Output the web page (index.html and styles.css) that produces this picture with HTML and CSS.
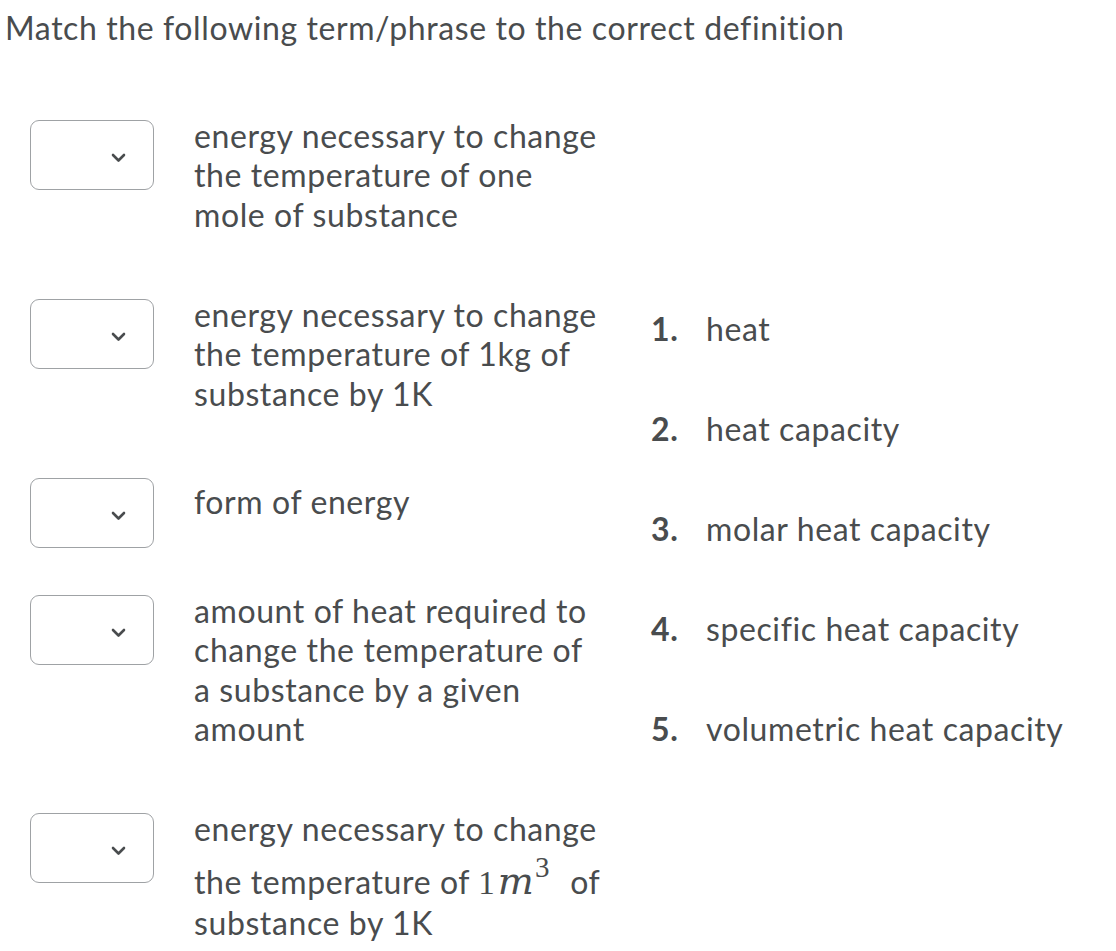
FILE: index.html
```html
<!DOCTYPE html>
<html lang="en">
<head>
<meta charset="utf-8">
<title>Matching question</title>
<link rel="stylesheet" href="styles.css">
</head>
<body>
<main class="question">
  <h1 class="prompt">Match the following term/phrase to the correct definition</h1>
  <div class="matching">
    <div class="pairs">
      <div class="pair">
        <div class="select" role="combobox" aria-label="Select answer"><svg class="chevron" viewBox="0 0 15 10" aria-hidden="true"><polyline points="2,2 7.5,7.5 13,2"/></svg></div>
        <p class="definition">energy necessary to change the temperature of one mole of substance</p>
      </div>
      <div class="pair">
        <div class="select" role="combobox" aria-label="Select answer"><svg class="chevron" viewBox="0 0 15 10" aria-hidden="true"><polyline points="2,2 7.5,7.5 13,2"/></svg></div>
        <p class="definition">energy necessary to change the temperature of 1kg of substance by 1K</p>
      </div>
      <div class="pair pair--short">
        <div class="select" role="combobox" aria-label="Select answer"><svg class="chevron" viewBox="0 0 15 10" aria-hidden="true"><polyline points="2,2 7.5,7.5 13,2"/></svg></div>
        <p class="definition">form of energy</p>
      </div>
      <div class="pair">
        <div class="select" role="combobox" aria-label="Select answer"><svg class="chevron" viewBox="0 0 15 10" aria-hidden="true"><polyline points="2,2 7.5,7.5 13,2"/></svg></div>
        <p class="definition">amount of heat required to change the temperature of a substance by a given amount</p>
      </div>
      <div class="pair">
        <div class="select" role="combobox" aria-label="Select answer"><svg class="chevron" viewBox="0 0 15 10" aria-hidden="true"><polyline points="2,2 7.5,7.5 13,2"/></svg></div>
        <p class="definition">energy necessary to change the temperature of <span class="math"><span class="math-num">1</span><span class="math-var">m</span><sup class="math-sup">3</sup></span> of substance by 1K</p>
      </div>
    </div>
    <ol class="choices">
      <li class="choice"><span class="choice-num">1.</span><span class="choice-text">heat</span></li>
      <li class="choice"><span class="choice-num">2.</span><span class="choice-text">heat capacity</span></li>
      <li class="choice"><span class="choice-num">3.</span><span class="choice-text">molar heat capacity</span></li>
      <li class="choice"><span class="choice-num">4.</span><span class="choice-text">specific heat capacity</span></li>
      <li class="choice"><span class="choice-num">5.</span><span class="choice-text">volumetric heat capacity</span></li>
    </ol>
  </div>
</main>
</body>
</html>
```

FILE: styles.css
```css
html, body {
  margin: 0;
  padding: 0;
  background: #ffffff;
}

body {
  font-family: Lato, "Open Sans", sans-serif;
  font-size: 32px;
  letter-spacing: 0.6px;
  line-height: 39.5px;
  color: #494c4e;
}

.question {
  padding: 8px 0 0 5px;
}

.prompt {
  margin: 0;
  font-size: 32px;
  font-weight: 400;
  letter-spacing: 0.6px;
  line-height: 39.5px;
  color: #494c4e;
}

.matching {
  display: flex;
  align-items: center;
  margin-top: 68px;
  padding-left: 25px;
}

.pairs {
  flex: none;
  display: flex;
  flex-direction: column;
  gap: 60.5px;
  width: 574px;
}

.pair {
  display: flex;
  align-items: flex-start;
  gap: 40px;
}

.pair--short {
  margin-bottom: -17.5px;
}

.pair--short .definition {
  padding-top: 8px;
}

.select {
  flex: none;
  box-sizing: border-box;
  width: 124px;
  height: 70px;
  margin-top: 4px;
  border: 1.5px solid #9fa2a5;
  border-radius: 9px;
  background: #ffffff;
  display: flex;
  align-items: center;
  justify-content: flex-end;
  padding: 6px 27px 0 0;
}

.chevron {
  width: 15px;
  height: 10px;
  fill: none;
  stroke: #494c4e;
  stroke-width: 2.6;
  stroke-linecap: round;
  stroke-linejoin: round;
}

.definition {
  margin: 0;
  width: 410px;
}

.math {
  display: inline-block;
  padding-top: 13px;
  margin-right: 12px;
  font-family: "Liberation Serif", "DejaVu Serif", serif;
  font-size: 33px;
  letter-spacing: 0;
  white-space: nowrap;
}

.math-var {
  font-family: "DejaVu Serif", "Liberation Serif", serif;
  font-style: italic;
  font-size: 38px;
  margin-left: 3px;
}

.math-sup {
  font-size: 29px;
  line-height: 0;
  vertical-align: 17px;
  margin-left: 1px;
}

.choices {
  list-style: none;
  margin: 0 0 0 47px;
  padding: 0;
  display: flex;
  flex-direction: column;
  gap: 60.5px;
}

.choice {
  display: flex;
}

.choice-num {
  width: 55px;
  flex: none;
  font-weight: 700;
}
```
